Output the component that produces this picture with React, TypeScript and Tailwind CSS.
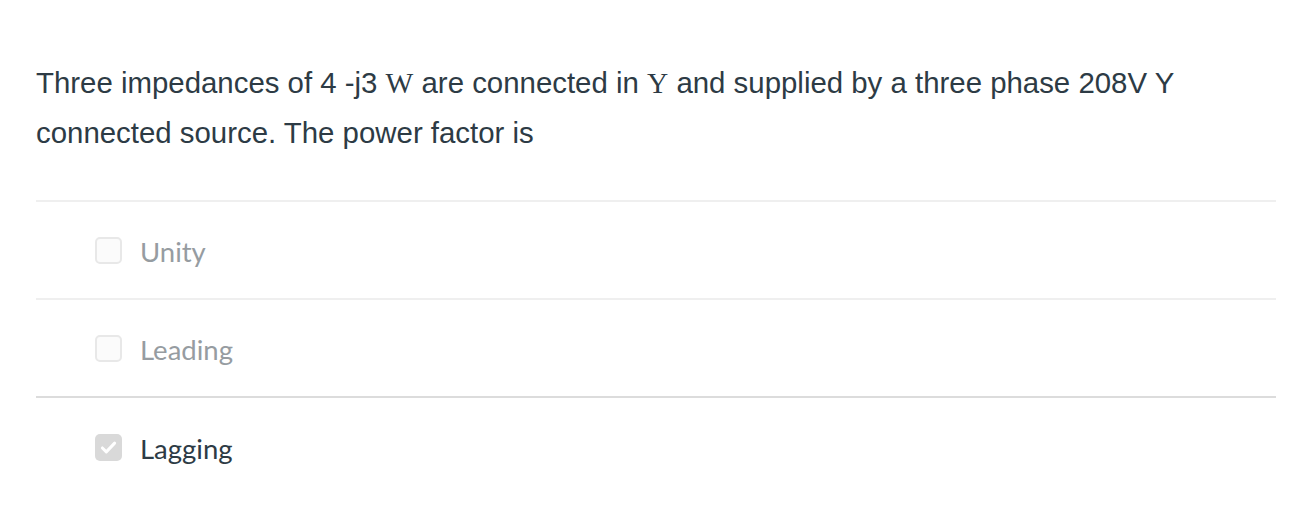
import React from 'react'

const options = [
  { label: 'Unity', checked: false },
  { label: 'Leading', checked: false },
  { label: 'Lagging', checked: true },
]

function Box({ checked }: { checked: boolean }) {
  if (checked) {
    return (
      <span className="flex h-[27px] w-[27px] shrink-0 items-center justify-center rounded-[5px] bg-[#d9d9d9]">
        <svg viewBox="0 0 24 24" className="h-[21px] w-[21px]" fill="none" stroke="#fff" strokeWidth="3.4" strokeLinecap="round" strokeLinejoin="round">
          <path d="M5 12.5l4.5 4.5L19 7" />
        </svg>
      </span>
    )
  }
  return <span className="h-[27px] w-[27px] shrink-0 rounded-[5px] border-2 border-[#e8e8e8] bg-[#fbfbfb]" />
}

export default function App() {
  return (
    <div className="min-h-[518px] bg-white px-[36px] pt-[58px] pb-[20px]">
      <p className="text-[29.4px] leading-[50px] text-[#2d3b45] font-['Liberation_Sans',Arial,sans-serif]">
        Three impedances of 4 -j3 <span className="font-['Liberation_Serif',serif]">W</span> are connected in{' '}
        <span className="font-['Liberation_Serif',serif]">Y</span> and supplied by a three phase 208V Y connected source. The power
        factor is
      </p>

      <div className="mt-[42px] w-[1240px] border-t-2 border-[#efefef]">
        {options.map((o, i) => (
          <div
            key={o.label}
            className={
              'flex h-[98px] items-center gap-[18px] pl-[59px] ' +
              (i === 0 ? 'border-b-2 border-[#efefef]' : i === 1 ? 'border-b-2 border-[#dcdcdc]' : '')
            }
          >
            <Box checked={o.checked} />
            <span
              className={
                "translate-y-[2px] text-[27.5px] font-['Lato','Noto_Sans',sans-serif] " +
                (o.checked ? 'text-[#2d3b45]' : 'text-[#969ca1]')
              }
            >
              {o.label}
            </span>
          </div>
        ))}
      </div>
    </div>
  )
}
